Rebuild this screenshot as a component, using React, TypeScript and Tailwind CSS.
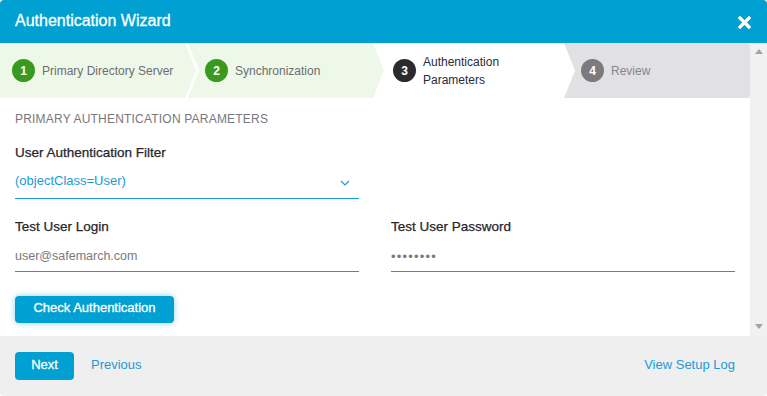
import React from "react";

const steps = [
  { n: 1, label: "Primary Directory Server", state: "done" },
  { n: 2, label: "Synchronization", state: "done" },
  { n: 3, label: "Authentication Parameters", state: "active" },
  { n: 4, label: "Review", state: "todo" },
];

function StepItem({ step, first }: { step: (typeof steps)[number]; first: boolean }) {
  const bg =
    step.state === "done" ? "bg-[#eef8e9]" : step.state === "active" ? "bg-white" : "bg-[#e1e1e3]";
  const dot =
    step.state === "done" ? "bg-[#3a9a1f]" : step.state === "active" ? "bg-[#2b2b2f]" : "bg-[#7b7b7f]";
  const text =
    step.state === "done" ? "text-[#6d6d72]" : step.state === "active" ? "text-[#2a2a3a]" : "text-[#87878b]";
  const clip = first
    ? "[clip-path:polygon(0_0,calc(100%_-_11px)_0,100%_50%,calc(100%_-_11px)_100%,0_100%)] ml-0 pl-[12px]"
    : "[clip-path:polygon(0_0,calc(100%_-_11px)_0,100%_50%,calc(100%_-_11px)_100%,0_100%,11px_50%)] -ml-[8px] pl-[17px]";
  return (
    <div className={`flex items-center w-[196px] shrink-0 h-full ${bg} ${clip}`}>
      <div
        className={`w-[23px] h-[23px] rounded-full ${dot} text-white text-[12px] font-bold flex items-center justify-center shrink-0`}
      >
        {step.n}
      </div>
      <div className={`ml-[7px] text-[12px] leading-[18px] ${text} ${step.state === "active" ? "w-[110px]" : ""}`}>
        {step.label}
      </div>
    </div>
  );
}

export default function App() {
  return (
    <div
      className="w-full h-[396px] bg-white rounded-[4px] overflow-hidden flex flex-col"
      style={{ fontFamily: '"Liberation Sans", Arial, sans-serif' }}
    >
      {/* Header */}
      <div className="h-[43px] shrink-0 bg-[#00a0d3] flex items-center justify-between pl-[15px] pr-[16px]">
        <div className="text-white text-[16px] pb-[2px] [-webkit-text-stroke:0.3px_white]">Authentication Wizard</div>
        <svg width="13" height="13" viewBox="0 0 13 13" className="mt-[1px]">
          <path d="M2 2 L11 11 M11 2 L2 11" stroke="white" strokeWidth="3.2" strokeLinecap="square" />
        </svg>
      </div>

      {/* Body with scrollbar */}
      <div className="flex flex-1 min-h-0">
        <div className="flex-1 min-w-0 flex flex-col">
          {/* Steps */}
          <div className="h-[55px] shrink-0 flex bg-white overflow-hidden">
            {steps.map((s, i) => (
              <StepItem key={s.n} step={s} first={i === 0} />
            ))}
          </div>

          {/* Form */}
          <div className="px-[15px]">
            <div className="mt-[13px] h-[16px] leading-[16px] text-[12px] tracking-[0.2px] text-[#77777b] uppercase">
              Primary Authentication Parameters
            </div>

            <div className="grid grid-cols-2 gap-x-8">
              <div>
                <div className="mt-[17px] h-[18px] leading-[18px] text-[13.5px] text-[#26262b] [-webkit-text-stroke:0.25px_#26262b]">
                  User Authentication Filter
                </div>
                <div className="h-[37px] flex items-start justify-between pt-[11px] border-b border-[#1a9bd6]">
                  <span className="text-[13px] leading-[16px] text-[#1b9ad6]">(objectClass=User)</span>
                  <svg width="10" height="6" viewBox="0 0 10 6" className="mr-[9px] mt-[7px]">
                    <path d="M1 1 L5 5 L9 1" fill="none" stroke="#1b9ad6" strokeWidth="1.2" />
                  </svg>
                </div>
              </div>
              <div />

              <div>
                <div className="mt-[19px] h-[18px] leading-[18px] text-[13.5px] text-[#26262b] [-webkit-text-stroke:0.25px_#26262b]">
                  Test User Login
                </div>
                <div className="mt-[6px] h-[30px] flex items-center border-b border-[#1a9bd6]">
                  <span className="text-[12.5px] text-[#7a7a7e]">user@safemarch.com</span>
                </div>
              </div>
              <div>
                <div className="mt-[19px] h-[18px] leading-[18px] text-[13.5px] text-[#26262b] [-webkit-text-stroke:0.25px_#26262b]">
                  Test User Password
                </div>
                <div className="mt-[6px] h-[30px] flex items-center border-b border-[#1a9bd6]">
                  <span className="text-[13px] tracking-[1.2px] text-[#7a7a7e]">••••••••</span>
                </div>
              </div>
            </div>

            <button className="mt-[24px] h-[27px] w-[159px] rounded-[4px] bg-[#00a0d3] text-white text-[13px] [-webkit-text-stroke:0.3px_white] shadow-[0_0_6px_rgba(0,160,211,0.45)] flex items-center justify-center pb-[3px]">
              Check Authentication
            </button>
          </div>
        </div>

        {/* Scrollbar */}
        <div className="w-[17px] shrink-0 bg-[#f1f1f1] flex flex-col items-center justify-between pt-[6px] pb-[7px]">
          <svg width="8" height="5" viewBox="0 0 8 5">
            <path d="M0 5 L4 0 L8 5 Z" fill="#a3a3a3" />
          </svg>
          <svg width="8" height="5" viewBox="0 0 8 5">
            <path d="M0 0 L8 0 L4 5 Z" fill="#a3a3a3" />
          </svg>
        </div>
      </div>

      {/* Footer */}
      <div className="h-[60px] shrink-0 bg-[#efefef] flex items-center justify-between pl-[15px] pr-[32px]">
        <div className="flex items-center">
          <button className="h-[28px] w-[59px] rounded-[4px] bg-[#00a0d3] text-white text-[13px] [-webkit-text-stroke:0.3px_white] flex items-center justify-center pb-[2px]">
            Next
          </button>
          <span className="ml-[17px] text-[13px] text-[#1b9ad6] pb-[2px]">Previous</span>
        </div>
        <span className="text-[13px] text-[#1b9ad6] pb-[2px]">View Setup Log</span>
      </div>
    </div>
  );
}
